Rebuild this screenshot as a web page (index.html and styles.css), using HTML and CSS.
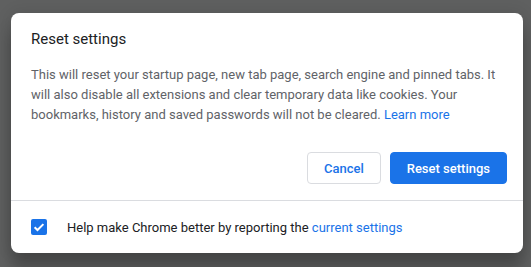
FILE: index.html
```html
<!DOCTYPE html>
<html>
<head>
<meta charset="utf-8">
<link rel="stylesheet" href="styles.css">
</head>
<body>
<div class="dialog">
  <div class="title">Reset settings</div>
  <div class="body">This will reset your startup page, new tab page, search engine and pinned tabs. It will also disable all extensions and clear temporary data like cookies. Your bookmarks, history and saved passwords will not be cleared. <a class="link">Learn more</a></div>
  <div class="buttons">
    <button class="btn cancel">Cancel</button>
    <button class="btn action">Reset settings</button>
  </div>
  <div class="footer">
    <span class="checkbox">
      <svg width="16" height="16" viewBox="0 0 16 16"><path d="M3.6 8.2 L6.5 11 L12.4 5.1" fill="none" stroke="#fff" stroke-width="2"/></svg>
    </span>
    <span class="label">Help make Chrome better by reporting the <a class="link">current settings</a></span>
  </div>
</div>
</body>
</html>
```
FILE: styles.css
```css
html, body {
  margin: 0;
  padding: 0;
}
body {
  width: 531px;
  height: 267px;
  background: #5f6060;
  overflow: hidden;
  font-family: Roboto, "Liberation Sans", sans-serif;
  padding-top: 13px;
  padding-left: 11px;
  box-sizing: border-box;
}
.dialog {
  width: 512px;
  height: 240px;
  background: #fff;
  border-radius: 8px;
  box-shadow: 0 0 16px rgba(0,0,0,.12), 0 16px 16px rgba(0,0,0,.24);
  display: flex;
  flex-direction: column;
  box-sizing: border-box;
  overflow: hidden;
}
.title {
  padding: 16px 20px 0;
  font-size: 15px;
  line-height: 20px;
  color: #202124;
}
.body {
  padding: 16px 20px 0;
  font-size: 13px;
  line-height: 20px;
  color: #5f6368;
}
.link {
  color: #1a73e8;
  text-decoration: none;
}
.buttons {
  display: flex;
  justify-content: flex-end;
  gap: 9px;
  padding: 27px 16px 16px;
  border-bottom: 1px solid #dadce0;
}
.btn {
  height: 32px;
  padding: 0 16px;
  border-radius: 4px;
  font-family: Roboto, "Liberation Sans", sans-serif;
  font-size: 13px;
  font-weight: 500;
  box-sizing: border-box;
}
.cancel {
  background: #fff;
  color: #1a73e8;
  border: 1px solid #dadce0;
}
.action {
  background: #1a73e8;
  color: #fff;
  border: 1px solid #1a73e8;
}
.footer {
  flex: 1;
  display: flex;
  align-items: center;
  padding: 0 20px;
  gap: 20px;
}
.checkbox {
  width: 16px;
  height: 16px;
  border-radius: 2px;
  background: #1a73e8;
  display: flex;
}
.label {
  font-size: 13px;
  color: #202124;
}
```
